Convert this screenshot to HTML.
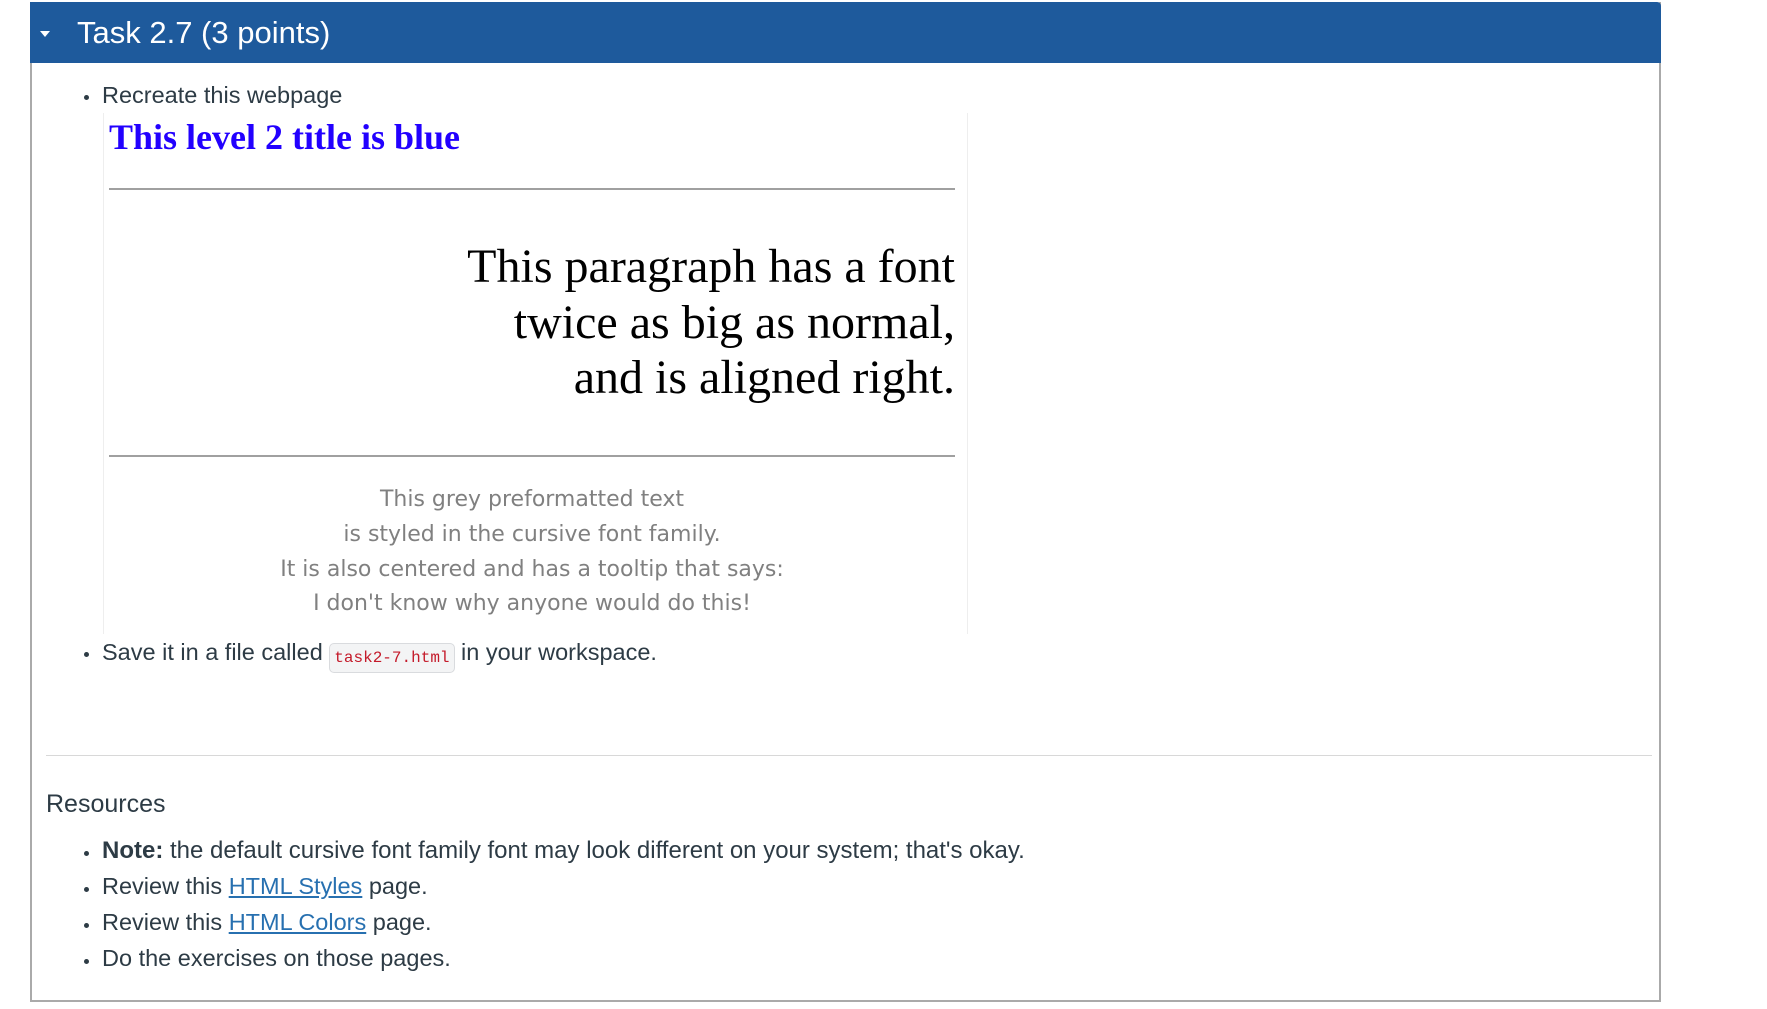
<!DOCTYPE html>
<html><head><meta charset="utf-8"><style>
html,body{margin:0;padding:0;width:1767px;height:1009px;background:#fff;overflow:hidden}
body{position:relative;font-family:"Liberation Sans",sans-serif;color:#2d3b45}
.a{position:absolute;white-space:nowrap}
.t{font-size:23.5px;line-height:23.5px}
.dot{position:absolute;width:5px;height:5px;border-radius:50%;background:#2d3b45}
a{color:#2770b0;text-decoration:underline}
.ser{font-family:"Liberation Serif",serif;color:#000}
.cur{font-family:"Comic Sans MS","DejaVu Sans",cursive;color:#808080;font-size:22px;line-height:22px;left:109px;width:846px;text-align:center}
</style></head><body>
<div class="a" style="left:30px;top:2px;width:1631px;height:1000px;border:1px solid #aaa;border-top:none;border-width:0 2px 2px 2px;box-sizing:border-box"></div>
<div class="a" style="left:30px;top:2px;width:1631px;height:61px;background:#1e5a9c;border-radius:0 4px 0 0"></div>
<div class="a" style="left:40px;top:31px;width:0;height:0;border-left:5px solid transparent;border-right:5px solid transparent;border-top:6px solid #fff"></div>
<div class="a" style="left:77px;top:17px;font-size:31px;line-height:31px;color:#fff">Task 2.7 (3 points)</div>

<div class="dot" style="left:84px;top:95px"></div>
<div class="a t" style="left:102px;top:84px">Recreate this webpage</div>

<div class="a" style="left:103px;top:113px;width:863px;height:521px;border-left:1px solid #eee;border-right:1px solid #eee"></div>
<div class="a ser" style="left:109px;top:119px;font-size:36px;line-height:36px;font-weight:bold;color:#2200ff">This level 2 title is blue</div>
<div class="a" style="left:109px;top:188px;width:846px;height:0;border-top:2px solid #a0a0a0"></div>
<div class="a ser" style="left:109px;width:846px;text-align:right;top:243px;font-size:48px;line-height:48px">This paragraph has a font</div>
<div class="a ser" style="left:109px;width:846px;text-align:right;top:299px;font-size:48px;line-height:48px">twice as big as normal,</div>
<div class="a ser" style="left:109px;width:846px;text-align:right;top:354px;font-size:48px;line-height:48px">and is aligned right.</div>
<div class="a" style="left:109px;top:455px;width:846px;height:0;border-top:2px solid #a0a0a0"></div>
<div class="a cur" style="top:489px">This grey preformatted text</div>
<div class="a cur" style="top:524px">is styled in the cursive font family.</div>
<div class="a cur" style="top:559px">It is also centered and has a tooltip that says:</div>
<div class="a cur" style="top:593px">I don't know why anyone would do this!</div>

<div class="dot" style="left:84px;top:652px"></div>
<div class="a t" style="left:102px;top:641px">Save it in a file called <span style="display:inline-block;font-family:'Liberation Mono',monospace;font-size:16px;line-height:22px;color:#c41a2a;background:#f3f4f5;border:1px solid #d9dbde;border-radius:5px;padding:3px 4px;vertical-align:-2px">task2-7.html</span> in your workspace.</div>

<div class="a" style="left:46px;top:755px;width:1606px;height:0;border-top:1px solid #d8d8d8"></div>
<div class="a" style="left:46px;top:792px;font-size:25px;line-height:25px">Resources</div>

<div class="dot" style="left:84px;top:851px"></div>
<div class="a t" style="left:102px;top:839px;font-size:24px;line-height:24px"><b>Note:</b> the default cursive font family font may look different on your system; that's okay.</div>
<div class="dot" style="left:84px;top:887px"></div>
<div class="a t" style="left:102px;top:875px">Review this <a>HTML Styles</a> page.</div>
<div class="dot" style="left:84px;top:923px"></div>
<div class="a t" style="left:102px;top:911px">Review this <a>HTML Colors</a> page.</div>
<div class="dot" style="left:84px;top:959px"></div>
<div class="a t" style="left:102px;top:947px">Do the exercises on those pages.</div>
</body></html>
